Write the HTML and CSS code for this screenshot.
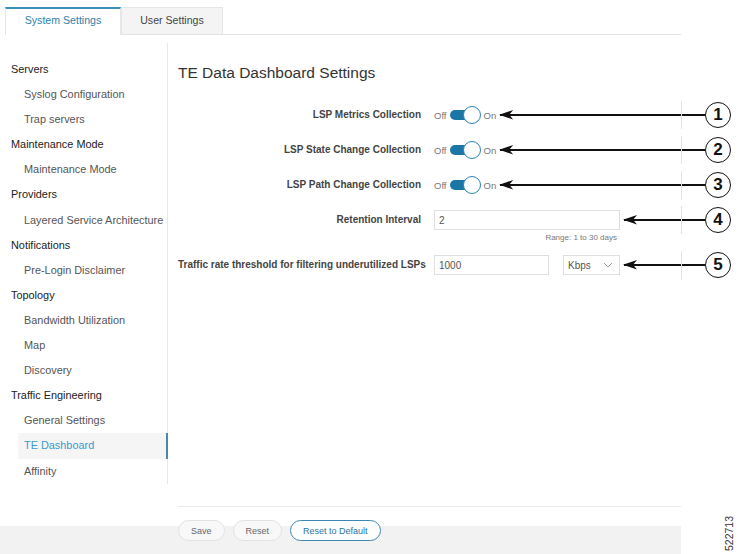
FILE: index.html
```html
<html>
<head>
<title>TE Data Dashboard Settings</title>
<link rel="stylesheet" href="styles.css">
</head>
<body>

<div class="page">
    <div class="app">
        <div class="tabs">
            <div class="tab active">System Settings</div>
            <div class="tab">User Settings</div>
        </div>

        <div class="main">
            <nav class="sidebar">
                <div class="group">Servers</div>
                <div class="item">Syslog Configuration</div>
                <div class="item">Trap servers</div>
                <div class="group">Maintenance Mode</div>
                <div class="item">Maintenance Mode</div>
                <div class="group">Providers</div>
                <div class="item">Layered Service Architecture</div>
                <div class="group">Notifications</div>
                <div class="item">Pre-Login Disclaimer</div>
                <div class="group">Topology</div>
                <div class="item">Bandwidth Utilization</div>
                <div class="item">Map</div>
                <div class="item">Discovery</div>
                <div class="group">Traffic Engineering</div>
                <div class="item">General Settings</div>
                <div class="item selected">TE Dashboard</div>
                <div class="item">Affinity</div>
            </nav>

            <section class="content">
                <h1 class="title">TE Data Dashboard Settings</h1>

                <div class="form">
                    <div class="row">
                        <label class="label">LSP Metrics Collection</label>
                        <div class="toggle"><span>Off</span><span class="switch"></span><span>On</span></div>
                        <div class="arrow"></div>
                        <div class="callout">1</div>
                    </div>
                    <div class="row">
                        <label class="label">LSP State Change Collection</label>
                        <div class="toggle"><span>Off</span><span class="switch"></span><span>On</span></div>
                        <div class="arrow"></div>
                        <div class="callout">2</div>
                    </div>
                    <div class="row">
                        <label class="label">LSP Path Change Collection</label>
                        <div class="toggle"><span>Off</span><span class="switch"></span><span>On</span></div>
                        <div class="arrow"></div>
                        <div class="callout">3</div>
                    </div>
                    <div class="row">
                        <label class="label">Retention Interval</label>
                        <div class="field">
                            <input type="text" class="input wide" value="2">
                            <div class="hint">Range: 1 to 30 days</div>
                        </div>
                        <div class="arrow"></div>
                        <div class="callout">4</div>
                    </div>
                    <div class="row">
                        <label class="label">Traffic rate threshold for filtering underutilized LSPs</label>
                        <input type="text" class="input short" value="1000">
                        <div class="select">
                            <span>Kbps</span>
                            <svg width="10" height="6" viewBox="0 0 10 6"><path d="M1 1 L5 5 L9 1" fill="none" stroke="#9a9a9a" stroke-width="1"/></svg>
                        </div>
                        <div class="arrow"></div>
                        <div class="callout">5</div>
                    </div>
                </div>

                <div class="footer">
                    <button class="btn">Save</button>
                    <button class="btn">Reset</button>
                    <button class="btn outline">Reset to Default</button>
                </div>
            </section>
        </div>
    </div>

    <div class="gutter"><span class="fig">522713</span></div>
</div>

</body>
</html>
```

FILE: styles.css
```css
body {
    margin: 0;
    font-family: "Liberation Sans", Arial, sans-serif;
    background-color: #fff;
    color: #333;
}

.page {
    display: flex;
    width: 740px;
    height: 554px;
    overflow: hidden;
}

.app {
    flex-shrink: 0;
    width: 681px;
    height: 554px;
    display: flex;
    flex-direction: column;
    background: linear-gradient(#f2f2f2, #f2f2f2) bottom / 100% 28px no-repeat;
}

/* tabs */

.tabs {
    display: flex;
    align-items: flex-start;
    width: 676px;
    margin-left: 5px;
    padding-top: 7px;
    border-bottom: 1px solid #e3e3e3;
}

.tab {
    box-sizing: border-box;
    width: 102px;
    height: 27px;
    line-height: 25px;
    border: 1px solid #e6e6e6;
    border-bottom: none;
    background-color: #f4f4f4;
    color: #444;
    font-size: 10.6px;
    text-align: center;
}

.tab.active {
    width: 116px;
    height: 28px;
    margin-bottom: -1px;
    line-height: 22px;
    border-top: 2px solid #3a8dbb;
    background-color: #fff;
    color: #2e7fae;
}

/* sidebar */

.main {
    flex: 1;
    display: flex;
    min-height: 0;
    margin-top: 8px;
}

.sidebar {
    flex-shrink: 0;
    align-self: flex-start;
    box-sizing: border-box;
    width: 168px;
    padding: 14px 0 0;
    border-right: 1px solid #e8e8e8;
    font-size: 10.9px;
    white-space: nowrap;
}

.group {
    padding-left: 11px;
    line-height: 25.1px;
    color: #222;
}

.item {
    padding-left: 24px;
    line-height: 25.1px;
    color: #555;
}

.item.selected {
    margin: 0 -1px 0 18px;
    padding-left: 6px;
    background-color: #f5f5f5;
    border-right: 2px solid #4d87a8;
    color: #3a9ad0;
}

/* content */

.content {
    flex: 1;
    min-width: 0;
    display: flex;
    flex-direction: column;
    padding-left: 10px;
}

.title {
    margin: 20px 0 22px;
    font-size: 15.5px;
    font-weight: normal;
    line-height: 20px;
    color: #333;
}

.form {
    display: flex;
    flex-direction: column;
    gap: 12px;
    width: 553px;
}

.row {
    display: flex;
    align-items: flex-start;
    position: relative;
}

.row::after {
    content: '';
    position: absolute;
    left: 503px;
    top: -4px;
    width: 1px;
    height: 28px;
    background-color: #e2e2e2;
}

.label {
    flex-shrink: 0;
    width: 243px;
    margin-right: 13px;
    text-align: right;
    font-size: 10px;
    font-weight: bold;
    line-height: 20px;
    color: #444;
    white-space: nowrap;
}

.toggle {
    display: flex;
    align-items: center;
    gap: 3px;
    height: 20px;
    font-size: 9.5px;
    color: #777;
}

.switch {
    position: relative;
    width: 31px;
    height: 18px;
}

.switch::before {
    content: '';
    position: absolute;
    left: 0;
    top: 4px;
    width: 26px;
    height: 10px;
    border-radius: 5px;
    background-color: #1b76a8;
}

.switch::after {
    content: '';
    position: absolute;
    right: 0;
    top: 0;
    width: 16px;
    height: 16px;
    border: 1px solid #2d84b5;
    border-radius: 50%;
    background-color: #fff;
}

.field {
    display: flex;
    flex-direction: column;
}

.input {
    box-sizing: border-box;
    height: 20px;
    padding: 0 4px;
    border: 1px solid #dfdfdf;
    font-family: inherit;
    font-size: 10px;
    color: #555;
    outline: none;
}

.input.wide {
    width: 186px;
}

.input.short {
    width: 115px;
}

.hint {
    margin-top: 3px;
    padding-right: 3px;
    text-align: right;
    font-size: 8px;
    line-height: 10px;
    color: #777;
}

.select {
    box-sizing: border-box;
    display: flex;
    align-items: center;
    justify-content: space-between;
    width: 57px;
    height: 20px;
    margin-left: 14px;
    padding: 0 6px 0 4px;
    border: 1px solid #dfdfdf;
    font-size: 10px;
    color: #555;
}

/* callouts */

.arrow {
    flex: 1;
    position: relative;
    height: 1.5px;
    margin: 9px 0 0 4px;
    background-color: #111;
}

.arrow::before {
    content: '';
    position: absolute;
    left: -1px;
    top: -4px;
    width: 14px;
    height: 9.5px;
    background-color: #111;
    clip-path: polygon(0 50%, 100% 0, 72% 50%, 100% 100%);
}

.callout {
    box-sizing: border-box;
    flex-shrink: 0;
    width: 26px;
    height: 26px;
    margin-top: -3px;
    border: 1.5px solid #111;
    border-radius: 50%;
    background-color: #fff;
    text-align: center;
    font-size: 17px;
    font-weight: bold;
    line-height: 23px;
    color: #111;
}

/* footer */

.footer {
    display: flex;
    gap: 8px;
    width: 503px;
    margin-top: auto;
    padding: 13px 0;
    border-top: 1px solid #e8e8e8;
}

.btn {
    height: 21px;
    padding: 0 12px;
    border: 1px solid #e2e2e2;
    border-radius: 11px;
    background-color: #f8f8f8;
    font-family: inherit;
    font-size: 9px;
    color: #666;
    cursor: pointer;
}

.btn.outline {
    border-color: #3f87b3;
    background-color: #fff;
    color: #2a76a6;
}

.gutter {
    display: flex;
    flex-direction: column;
    justify-content: flex-end;
    padding: 0 0 3px 42px;
}

.fig {
    writing-mode: vertical-rl;
    transform: rotate(180deg);
    font-size: 10.5px;
    color: #333;
}
```
